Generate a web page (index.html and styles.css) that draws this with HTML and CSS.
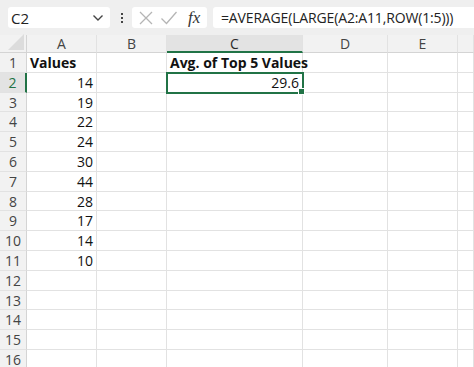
FILE: index.html
```
<!DOCTYPE html>
<html>
  <head>
    <meta charset="UTF-8">
    <link rel="stylesheet" href="styles.css">
  </head>
  <body>
    <div class="toolbar">
      <div class="name-box">
        <span class="name">C2</span>
        <svg class="chevron" width="12" height="8" viewBox="0 0 12 8"><path d="M1.5 1.5 L6 6 L10.5 1.5" fill="none" stroke="#444" stroke-width="1.4"/></svg>
      </div>
      <div class="dots"><span></span><span></span><span></span></div>
      <div class="fx-box">
        <svg width="16" height="16" viewBox="0 0 16 16"><path d="M2 2 L14 14 M14 2 L2 14" stroke="#b5b5b5" stroke-width="1.3" fill="none"/></svg>
        <svg width="18" height="16" viewBox="0 0 18 16"><path d="M1.5 8.5 L6.5 13.5 L16.5 2" stroke="#b5b5b5" stroke-width="1.3" fill="none"/></svg>
        <span class="fx">fx</span>
      </div>
      <div class="formula">=AVERAGE(LARGE(A2:A11,ROW(1:5)))</div>
    </div>
    <div class="sheet">
      <div class="corner"><svg width="16" height="16" viewBox="0 0 16 16"><path d="M16 0 L16 16 L0 16 Z" fill="#dcdcdc"/></svg></div>
      <div class="col-head">A</div>
      <div class="col-head">B</div>
      <div class="col-head active">C</div>
      <div class="col-head">D</div>
      <div class="col-head">E</div>
      <div class="col-head"></div>

      <div class="row-head">1</div><div class="cell bold">Values</div><div class="cell"></div><div class="cell bold">Avg. of Top 5 Values</div><div class="cell"></div><div class="cell"></div><div class="cell"></div>
      <div class="row-head active">2</div><div class="cell num">14</div><div class="cell"></div><div class="cell num selected">29.6</div><div class="cell"></div><div class="cell"></div><div class="cell"></div>
      <div class="row-head">3</div><div class="cell num">19</div><div class="cell"></div><div class="cell"></div><div class="cell"></div><div class="cell"></div><div class="cell"></div>
      <div class="row-head">4</div><div class="cell num">22</div><div class="cell"></div><div class="cell"></div><div class="cell"></div><div class="cell"></div><div class="cell"></div>
      <div class="row-head">5</div><div class="cell num">24</div><div class="cell"></div><div class="cell"></div><div class="cell"></div><div class="cell"></div><div class="cell"></div>
      <div class="row-head">6</div><div class="cell num">30</div><div class="cell"></div><div class="cell"></div><div class="cell"></div><div class="cell"></div><div class="cell"></div>
      <div class="row-head">7</div><div class="cell num">44</div><div class="cell"></div><div class="cell"></div><div class="cell"></div><div class="cell"></div><div class="cell"></div>
      <div class="row-head">8</div><div class="cell num">28</div><div class="cell"></div><div class="cell"></div><div class="cell"></div><div class="cell"></div><div class="cell"></div>
      <div class="row-head">9</div><div class="cell num">17</div><div class="cell"></div><div class="cell"></div><div class="cell"></div><div class="cell"></div><div class="cell"></div>
      <div class="row-head">10</div><div class="cell num">14</div><div class="cell"></div><div class="cell"></div><div class="cell"></div><div class="cell"></div><div class="cell"></div>
      <div class="row-head">11</div><div class="cell num">10</div><div class="cell"></div><div class="cell"></div><div class="cell"></div><div class="cell"></div><div class="cell"></div>
      <div class="row-head">12</div><div class="cell"></div><div class="cell"></div><div class="cell"></div><div class="cell"></div><div class="cell"></div><div class="cell"></div>
      <div class="row-head">13</div><div class="cell"></div><div class="cell"></div><div class="cell"></div><div class="cell"></div><div class="cell"></div><div class="cell"></div>
      <div class="row-head">14</div><div class="cell"></div><div class="cell"></div><div class="cell"></div><div class="cell"></div><div class="cell"></div><div class="cell"></div>
      <div class="row-head">15</div><div class="cell"></div><div class="cell"></div><div class="cell"></div><div class="cell"></div><div class="cell"></div><div class="cell"></div>
      <div class="row-head">16</div><div class="cell"></div><div class="cell"></div><div class="cell"></div><div class="cell"></div><div class="cell"></div><div class="cell"></div>
    </div>
  </body>
</html>
```

FILE: styles.css
```
:root {
  --grid: #e2e2e2;
  --head-bg: #f2f2f2;
  --green: #217346;
}
body {
  margin: 0;
  overflow: hidden;
  background: white;
  font-family: "Open Sans", "Noto Sans", sans-serif;
  color: #222;
}
.toolbar {
  display: flex;
  align-items: center;
  height: 35px;
  background: #efefef;
  padding: 0 0 0 8px;
  box-sizing: border-box;
}
.name-box {
  display: flex;
  align-items: center;
  justify-content: space-between;
  width: 102px;
  height: 21px;
  background: white;
  border-radius: 3px;
  padding: 0 6px 0 3px;
  box-sizing: border-box;
  font-size: 15px;
}
.dots {
  display: flex;
  flex-direction: column;
  gap: 2px;
  margin: 0 9px 0 11px;
}
.dots span {
  width: 2px;
  height: 2px;
  background: #444;
}
.fx-box {
  display: flex;
  align-items: center;
  gap: 6px;
  width: 75px;
  height: 21px;
  background: white;
  border-radius: 3px;
  padding: 0 4px 0 6px;
  box-sizing: border-box;
}
.fx {
  font-family: "Liberation Serif", serif;
  font-style: italic;
  font-size: 17px;
  color: #333;
  margin-left: 4px;
}
.formula {
  flex: 1;
  height: 21px;
  line-height: 21px;
  margin-left: 6px;
  background: white;
  border-radius: 3px 0 0 3px;
  padding-left: 8px;
  font-size: 14px;
  letter-spacing: -0.15px;
  white-space: nowrap;
  overflow: hidden;
}
.sheet {
  display: grid;
  grid-template-columns: 27px 70px 70px 136px 85px 70px 1fr;
  grid-template-rows: 18px;
  grid-auto-rows: 19.8px;
  font-size: 14px;
}
.corner {
  background: var(--head-bg);
  border-right: 1px solid #d4d4d4;
  border-bottom: 1px solid #d4d4d4;
  display: flex;
  align-items: flex-end;
  justify-content: flex-end;
  padding: 0 2px 2px 0;
}
.col-head {
  background: var(--head-bg);
  border-right: 1px solid var(--grid);
  border-bottom: 1px solid #d4d4d4;
  text-align: center;
  line-height: 17px;
  font-size: 14px;
  color: #444;
}
.col-head.active {
  background: #e3e3e3;
  border-bottom: 2px solid var(--green);
  color: #2b2b2b;
}
.row-head {
  background: var(--head-bg);
  border-right: 1px solid #d4d4d4;
  border-bottom: 1px solid var(--grid);
  text-align: center;
  font-size: 14px;
  line-height: 19px;
  color: #444;
}
.row-head.active {
  background: #e3e3e3;
  border-right: 2px solid var(--green);
  color: var(--green);
}
.cell {
  border-right: 1px solid var(--grid);
  border-bottom: 1px solid var(--grid);
  padding: 0 3px;
  line-height: 19px;
  font-size: 14px;
  white-space: nowrap;
  color: #111;
}
.bold {
  font-weight: bold;
}
.num {
  text-align: right;
}
.selected {
  position: relative;
  outline: 2px solid var(--green);
  outline-offset: -1px;
}
.selected::after {
  content: "";
  position: absolute;
  right: -3px;
  bottom: -3px;
  width: 5px;
  height: 5px;
  background: var(--green);
  border: 1px solid white;
}
```
